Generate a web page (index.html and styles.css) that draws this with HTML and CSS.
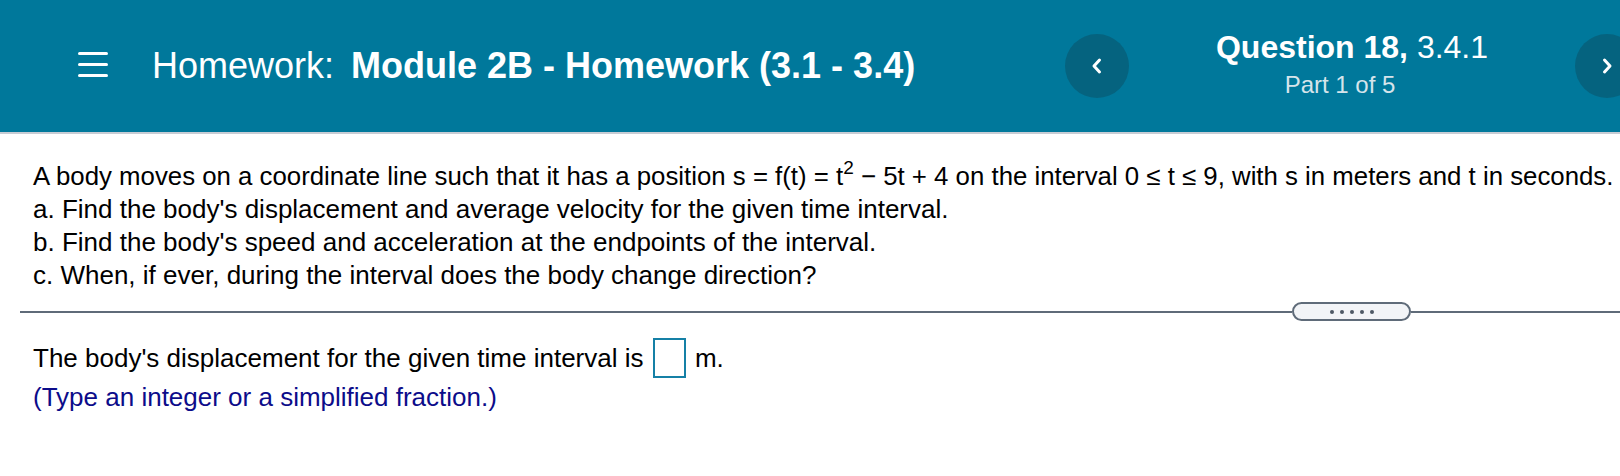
FILE: index.html
```html
<!DOCTYPE html>
<html lang="en">
<head>
<meta charset="utf-8">
<title>Homework: Module 2B - Homework (3.1 - 3.4)</title>
<link rel="stylesheet" href="styles.css">
</head>
<body>
<header class="topbar">
  <button class="menu" aria-label="Menu"><span></span><span></span><span></span></button>
  <h1 class="title"><span class="title-label">Homework:</span><span class="title-name">Module 2B - Homework (3.1 - 3.4)</span></h1>
  <nav class="qnav">
    <button class="nav-btn" aria-label="Previous question">
      <svg width="12" height="18" viewBox="0 0 12 18"><path d="M8.5 3 L3 9 L8.5 15" fill="none" stroke="#fff" stroke-width="3" stroke-linecap="round" stroke-linejoin="round"/></svg>
    </button>
    <div class="qinfo">
      <div class="qtitle"><b>Question 18,</b> 3.4.1</div>
      <div class="qpart">Part 1 of 5</div>
    </div>
    <button class="nav-btn" aria-label="Next question">
      <svg width="12" height="18" viewBox="0 0 12 18"><path d="M3.5 3 L9 9 L3.5 15" fill="none" stroke="#fff" stroke-width="3" stroke-linecap="round" stroke-linejoin="round"/></svg>
    </button>
  </nav>
</header>
<main class="content">
  <div class="question">
    <div class="qline qline-first">A body moves on a coordinate line such that it has a position s = f(t) = t<span class="sup">2</span> − 5t + 4 on the interval 0 ≤ t ≤ 9, with s in meters and t in seconds.</div>
    <div class="qline">a. Find the body's displacement and average velocity for the given time interval.</div>
    <div class="qline">b. Find the body's speed and acceleration at the endpoints of the interval.</div>
    <div class="qline">c. When, if ever, during the interval does the body change direction?</div>
  </div>
  <div class="divider">
    <span class="rule"></span>
    <span class="pill"><i></i><i></i><i></i><i></i><i></i></span>
    <span class="rule rule-right"></span>
  </div>
  <div class="answer">
    <p class="answer-line">The body's displacement for the given time interval is <span class="answer-box"></span> m.</p>
    <p class="hint">(Type an integer or a simplified fraction.)</p>
  </div>
</main>
</body>
</html>
```

FILE: styles.css
```css
* { box-sizing: border-box; }
html, body { margin: 0; padding: 0; }
body {
  font-family: "Liberation Sans", Arial, sans-serif;
  width: 1620px;
  height: 476px;
  overflow: hidden;
  background: #fff;
  color: #000;
}

.topbar {
  height: 134px;
  background: #00789b;
  border-bottom: 2px solid #c7ccd4;
  display: flex;
  align-items: center;
  padding-left: 78px;
  overflow: hidden;
  color: #fff;
}
.menu {
  width: 30px;
  display: flex;
  flex-direction: column;
  gap: 8px;
  background: none;
  border: 0;
  padding: 0;
  margin: 0 0 4px 0;
  flex-shrink: 0;
}
.menu span {
  display: block;
  height: 3px;
  background: #fff;
  border-radius: 2px;
}
.title {
  margin: 0 0 0 44px;
  font-size: 36px;
  font-weight: normal;
  line-height: 1.15;
  white-space: nowrap;
}
.title-name {
  font-weight: bold;
  margin-left: 17px;
}
.qnav {
  margin-left: auto;
  margin-right: -19px;
  display: flex;
  align-items: center;
  flex-shrink: 0;
}
.nav-btn {
  width: 64px;
  height: 64px;
  border-radius: 50%;
  background: #05637f;
  border: 0;
  padding: 0;
  display: flex;
  align-items: center;
  justify-content: center;
  flex-shrink: 0;
}
.nav-btn svg { display: block; }
.qinfo {
  width: 446px;
  display: flex;
  flex-direction: column;
  align-items: center;
  margin-bottom: 4px;
  white-space: nowrap;
}
.qtitle {
  font-size: 32px;
  line-height: 36px;
}
.qpart {
  font-size: 24px;
  line-height: 28px;
  margin-top: 6px;
  margin-right: 24px;
  color: #d6e4eb;
}

.content {
  padding-left: 20px;
}
.question {
  padding: 26px 0 0 13px;
  font-size: 26px;
  line-height: 33px;
}
.qline { white-space: nowrap; }
.qline-first { font-size: 25.8px; }
.sup {
  font-size: 19px;
  vertical-align: 11px;
  line-height: 0;
}
.divider {
  display: flex;
  align-items: center;
  height: 19px;
  margin-top: 10px;
}
.rule {
  flex: 1;
  height: 2px;
  background: #5f6b79;
}
.rule-right { flex: 0 0 209px; }
.pill {
  width: 119px;
  height: 19px;
  border: 2px solid #5f6b79;
  border-radius: 10px;
  background: #f2f4f7;
  display: flex;
  align-items: center;
  justify-content: center;
  gap: 6px;
  flex-shrink: 0;
}
.pill i {
  display: block;
  width: 4px;
  height: 4px;
  border-radius: 50%;
  background: #4f5966;
}
.answer {
  padding-left: 13px;
  margin-top: 17px;
  font-size: 26px;
}
.answer-line {
  margin: 0;
  line-height: 30px;
  white-space: nowrap;
}
.answer-box {
  display: inline-block;
  width: 33px;
  height: 40px;
  border: 2px solid #1580a6;
  vertical-align: -11px;
  margin: 0 2px;
}
.hint {
  margin: 4px 0 0;
  line-height: 30px;
  color: #0c0c8a;
}
```
